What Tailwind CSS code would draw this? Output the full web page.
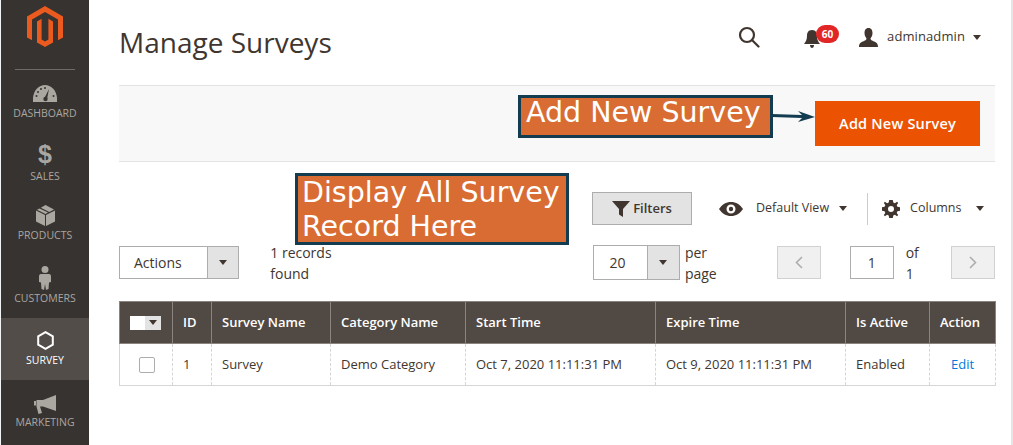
<!DOCTYPE html>
<html lang="en">
<head>
  <meta charset="UTF-8" />
  <title>Manage Surveys</title>
  <script src="https://cdn.jsdelivr.net/npm/@tailwindcss/browser@4"></script>
</head>
<body class="bg-white text-[#41362f] font-['Open_Sans',sans-serif] h-[445px] w-[1013px] overflow-hidden">
  <div class="flex h-[445px] w-[1013px] border-r-2 border-[#e4e4e4]">

    <!-- Sidebar -->
    <aside class="w-[89px] shrink-0 h-full bg-[#373330] border-l border-[#f4f4f4] text-[#aaa6a0] text-[10.5px] leading-[14px] overflow-hidden">
      <div class="h-[70px] mx-[14px] border-b border-[#6f6b67] flex justify-center pt-[6px]">
        <svg class="w-[36px] h-[41px]" viewBox="0 0 36 41" fill="#eb5a1e">
          <path d="M18 0 L36 10.5 V31.5 L31 34.2 V13.4 L18 6 L5 13.4 V34.2 L0 31.5 V10.5 Z" />
          <path d="M18 41 L10 36.4 V15.4 L14.6 12.8 V33.6 L18 35.4 L21.4 33.6 V12.8 L26 15.4 V36.4 Z" />
        </svg>
      </div>

      <!-- Dashboard -->
      <a class="h-[62px] flex flex-col items-center pt-[15px]">
        <svg class="w-[24px] h-[17px]" viewBox="0 0 24 17" fill="#aaa6a0">
          <path d="M0 17 C-1 7 5 0 12 0 C19 0 25 7 24 17 Z" />
          <path d="M11 14 L16 4 L14 14 Z" fill="#373330" />
          <circle cx="12.5" cy="14" r="2.2" fill="#373330" />
          <circle cx="5" cy="7" r="1" fill="#373330" />
          <circle cx="8" cy="4" r="1" fill="#373330" />
          <circle cx="12" cy="3" r="1" fill="#373330" />
          <circle cx="3.5" cy="11" r="1" fill="#373330" />
          <circle cx="20.5" cy="11" r="1" fill="#373330" />
        </svg>
        <span class="mt-[4px]">DASHBOARD</span>
      </a>

      <!-- Sales -->
      <a class="h-[62px] flex flex-col items-center pt-[11px]">
        <span class="h-[23px] text-[25px] leading-[23px] font-bold font-['Liberation_Sans',sans-serif]">$</span>
        <span class="mt-[3px]">SALES</span>
      </a>

      <!-- Products -->
      <a class="h-[62px] flex flex-col items-center pt-[11px]">
        <svg class="w-[19px] h-[21px]" viewBox="0 0 19 21" fill="#aaa6a0">
          <path d="M0 5.5 L9 10 V21 L0 16.5 Z" />
          <path d="M19 5.5 L10 10 V21 L19 16.5 Z" />
          <path d="M9.5 9 L1 4.8 L3.5 3.4 L12 7.6 Z" />
          <path d="M13.3 6.9 L4.8 2.7 L9.5 0 L18 4.6 Z" />
        </svg>
        <span class="mt-[2px]">PRODUCTS</span>
      </a>

      <!-- Customers -->
      <a class="h-[62px] flex flex-col items-center pt-[10px]">
        <svg class="w-[12px] h-[24px]" viewBox="0 0 12 24" fill="#aaa6a0">
          <circle cx="6" cy="3.5" r="3.5" />
          <path d="M2 8 H10 C11.5 8 12 9 12 10.5 V16 L10 16.5 L9.5 23 L7 24 L6 18 L5 24 L2.5 23 L2 16.5 L0 16 V10.5 C0 9 0.5 8 2 8 Z" />
        </svg>
        <span class="mt-[1px]">CUSTOMERS</span>
      </a>

      <!-- Survey -->
      <a class="h-[62px] flex flex-col items-center pt-[13px] bg-[#524d49] text-white">
        <svg class="w-[17px] h-[19px]" viewBox="0 0 17 19" fill="none" stroke="#ffffff" stroke-width="2">
          <path d="M8.5 1.2 L15.8 5.4 V13.6 L8.5 17.8 L1.2 13.6 V5.4 Z" />
        </svg>
        <span class="mt-[3px]">SURVEY</span>
      </a>

      <!-- Marketing -->
      <a class="h-[62px] flex flex-col items-center pt-[15px]">
        <svg class="w-[22px] h-[19px]" viewBox="0 0 22 19" fill="#aaa6a0">
          <path d="M22 0 V16 L9 11.5 H6 L8 18 L4.5 19 L2.5 11.5 V5 H9 Z" />
          <rect x="0" y="6" width="2" height="4.5" />
        </svg>
        <span class="mt-[1px]">MARKETING</span>
      </a>
    </aside>

    <!-- Main -->
    <main class="relative flex-1 min-w-0 pl-[30px] pr-[16px]">

      <!-- Page header -->
      <header class="h-[85px] flex items-start">
        <h1 class="mt-[23px] text-[28px] leading-[38px] font-normal">Manage Surveys</h1>
        <div class="ml-auto mt-[24px] flex items-center h-[26px] text-[13px]">
          <svg class="w-[22px] h-[22px]" viewBox="0 0 22 22" fill="none" stroke="#41362f" stroke-width="2.2">
            <circle cx="9" cy="9" r="7" />
            <path d="M14 14 L20.5 20.5" stroke-linecap="round" />
          </svg>
          <div class="relative ml-[44px] w-[35px] h-[26px]">
            <svg class="absolute left-0 top-[6px] w-[16px] h-[18px]" viewBox="0 0 16 18" fill="#41362f">
              <path d="M8 0 C12 0 13 3 13 6 C13 10 14.5 12 16 14 H0 C1.5 12 3 10 3 6 C3 3 4 0 8 0 Z" />
              <path d="M6 15 H10 C10 17 9 18 8 18 C7 18 6 17 6 15 Z" />
            </svg>
            <span class="absolute left-[12px] top-[1px] w-[23px] h-[18px] rounded-full bg-[#e22626] text-white text-[10px] leading-[18px] font-bold text-center">60</span>
          </div>
          <svg class="ml-[20px] w-[19px] h-[19px]" viewBox="0 0 19 19" fill="#41362f">
            <path d="M9.5 0 C12.5 0 13.5 2.5 13.5 5 C13.5 7.5 12.5 9 11.5 10.5 C11.5 12 13 12.6 15 13.4 C17.5 14.4 19 15.2 19 19 H0 C0 15.2 1.5 14.4 4 13.4 C6 12.6 7.5 12 7.5 10.5 C6.5 9 5.5 7.5 5.5 5 C5.5 2.5 6.5 0 9.5 0 Z" />
          </svg>
          <span class="ml-[9px] tracking-[0.1px]">adminadmin</span>
          <svg class="ml-[8px] w-[8px] h-[5px]" viewBox="0 0 8 5" fill="#41362f"><path d="M0 0 H8 L4 5 Z" /></svg>
          <span class="w-[14px]"></span>
        </div>
      </header>

      <!-- Page actions -->
      <div class="h-[77px] bg-[#f8f8f8] border-y border-[#e3e3e3] flex items-center justify-end pr-[15px]">
        <button class="w-[165px] h-[45px] bg-[#eb5202] text-white text-[14.5px] font-semibold tracking-[0.2px]">Add New Survey</button>
      </div>

      <!-- Toolbar row 1 -->
      <div class="mt-[30px] h-[33px] flex items-center text-[#41362f]">
        <button class="ml-[473px] w-[100px] h-[33px] bg-[#e3e3e3] border border-[#adadad] flex items-center justify-center gap-[3px] text-[13px] font-semibold">
          <svg class="w-[18px] h-[16px]" viewBox="0 0 18 16" fill="#41362f"><path d="M0 0 H18 L11 8 V16 L7 13.5 V8 Z" /></svg>
          Filters
        </button>
        <svg class="ml-[27px] w-[24px] h-[14px]" viewBox="0 0 24 14" fill="#41362f">
          <path fill-rule="evenodd" d="M0 7 C3 2.5 7 0 12 0 C17 0 21 2.5 24 7 C21 11.5 17 14 12 14 C7 14 3 11.5 0 7 Z M12 2.5 A4.5 4.5 0 1 0 12 11.5 A4.5 4.5 0 1 0 12 2.5 Z" />
          <circle cx="12" cy="7" r="2.2" />
        </svg>
        <span class="ml-[13px] text-[12.5px]">Default View</span>
        <svg class="ml-[10px] w-[8px] h-[5px]" viewBox="0 0 8 5" fill="#41362f"><path d="M0 0 H8 L4 5 Z" /></svg>
        <span class="ml-[20px] h-[32px] border-l border-[#cccccc]"></span>
        <svg class="ml-[14px] w-[18px] h-[18px]" viewBox="0 0 18 18" fill="#41362f">
          <path fill-rule="evenodd" d="M7.2 0 H10.8 L11.3 2.6 L12.9 3.3 L15.1 1.8 L16.2 2.9 L14.7 5.1 L15.4 6.7 L18 7.2 V10.8 L15.4 11.3 L14.7 12.9 L16.2 15.1 L15.1 16.2 L12.9 14.7 L11.3 15.4 L10.8 18 H7.2 L6.7 15.4 L5.1 14.7 L2.9 16.2 L1.8 15.1 L3.3 12.9 L2.6 11.3 L0 10.8 V7.2 L2.6 6.7 L3.3 5.1 L1.8 2.9 L2.9 1.8 L5.1 3.3 L6.7 2.6 Z M9 6 A3 3 0 1 0 9 12 A3 3 0 1 0 9 6 Z" />
        </svg>
        <span class="ml-[10px] text-[12.5px] -mt-[1px]">Columns</span>
        <svg class="ml-[14px] w-[8px] h-[5px]" viewBox="0 0 8 5" fill="#41362f"><path d="M0 0 H8 L4 5 Z" /></svg>
      </div>

      <!-- Toolbar row 2 -->
      <div class="mt-[21px] h-[33px] flex items-center text-[14px]">
        <div class="w-[121px] h-[33px] border border-[#adadad] flex">
          <span class="flex-1 pl-[14px] leading-[31px]">Actions</span>
          <span class="w-[31px] bg-[#e3e3e3] border-l border-[#adadad] flex items-center justify-center">
            <svg class="w-[8px] h-[5px]" viewBox="0 0 8 5" fill="#41362f"><path d="M0 0 H8 L4 5 Z" /></svg>
          </span>
        </div>
        <span class="ml-[31px]">1 records found</span>
        <div class="ml-[220px] w-[87px] h-[35px] border border-[#adadad] flex">
          <span class="flex-1 pl-[15px] leading-[33px]">20</span>
          <span class="w-[32px] bg-[#e3e3e3] border-l border-[#adadad] flex items-center justify-center">
            <svg class="w-[8px] h-[5px]" viewBox="0 0 8 5" fill="#41362f"><path d="M0 0 H8 L4 5 Z" /></svg>
          </span>
        </div>
        <span class="ml-[5px]">per page</span>
        <span class="ml-[35px] w-[44px] h-[33px] bg-[#f0f0f0] border border-[#d1d1d1] flex items-center justify-center">
          <svg class="w-[8px] h-[13px]" viewBox="0 0 8 13" fill="none" stroke="#adadad" stroke-width="1.6"><path d="M7 1 L1.5 6.5 L7 12" /></svg>
        </span>
        <span class="ml-[29px] w-[44px] h-[33px] border border-[#adadad] flex items-center justify-center">1</span>
        <span class="ml-[12px]">of 1</span>
        <span class="ml-[21px] w-[44px] h-[33px] bg-[#f0f0f0] border border-[#d1d1d1] flex items-center justify-center">
          <svg class="w-[8px] h-[13px]" viewBox="0 0 8 13" fill="none" stroke="#adadad" stroke-width="1.6"><path d="M1 1 L6.5 6.5 L1 12" /></svg>
        </span>
      </div>

      <!-- Grid -->
      <table class="mt-[22px] w-[876px] table-fixed border-collapse text-[13px]">
        <colgroup>
          <col class="w-[53px]" /><col class="w-[39px]" /><col class="w-[119px]" /><col class="w-[135px]" />
          <col class="w-[190px]" /><col class="w-[190px]" /><col class="w-[84px]" /><col class="w-[66px]" />
        </colgroup>
        <thead>
          <tr class="h-[42px] bg-[#514943] text-white text-left font-semibold">
            <th class="border border-[#8a837f] font-semibold">
              <div class="ml-[10px] flex w-[31px] h-[14px]">
                <span class="w-[15px] bg-white"></span>
                <span class="w-[16px] bg-[#e3e3e3] flex items-center justify-center">
                  <svg class="w-[8px] h-[5px]" viewBox="0 0 8 5" fill="#41362f"><path d="M0 0 H8 L4 5 Z" /></svg>
                </span>
              </div>
            </th>
            <th class="border border-[#8a837f] font-semibold pl-[10px]">ID</th>
            <th class="border border-[#8a837f] font-semibold pl-[10px]">Survey Name</th>
            <th class="border border-[#8a837f] font-semibold pl-[10px]">Category Name</th>
            <th class="border border-[#8a837f] font-semibold pl-[10px]">Start Time</th>
            <th class="border border-[#8a837f] font-semibold pl-[10px]">Expire Time</th>
            <th class="border border-[#8a837f] font-semibold pl-[10px]">Is Active</th>
            <th class="border border-[#8a837f] font-semibold pl-[10px]">Action</th>
          </tr>
        </thead>
        <tbody>
          <tr class="h-[42px]">
            <td class="border-l border-b border-[#d6d6d6]">
              <span class="block ml-[19px] w-[16px] h-[16px] bg-white border border-[#adadad] rounded-[2px]"></span>
            </td>
            <td class="border-l border-b border-l-[#d6d6d6] border-dashed border-b-[#d6d6d6] border-b-solid pl-[10px]">1</td>
            <td class="border-l border-dashed border-l-[#d6d6d6] pl-[10px]">Survey</td>
            <td class="border-l border-dashed border-l-[#d6d6d6] pl-[10px]">Demo Category</td>
            <td class="border-l border-dashed border-l-[#d6d6d6] pl-[10px]">Oct 7, 2020 11:11:31 PM</td>
            <td class="border-l border-dashed border-l-[#d6d6d6] pl-[10px]">Oct 9, 2020 11:11:31 PM</td>
            <td class="border-l border-dashed border-l-[#d6d6d6] pl-[10px]">Enabled</td>
            <td class="border-l border-r border-r-[#d6d6d6] border-dashed border-l-[#d6d6d6] text-center text-[#007bdb]">Edit</td>
          </tr>
          <tr><td colspan="8" class="h-0 p-0 border-t border-[#d6d6d6]"></td></tr>
        </tbody>
      </table>

      <!-- Annotations over the screenshot -->
      <div class="absolute left-[429px] top-[95px] w-[255px] h-[43px] bg-[#d96c32] border-[3px] border-[#133c51] text-white text-[28.5px] leading-[30px] pl-[5px] font-['DejaVu_Sans',sans-serif] whitespace-nowrap">Add New Survey</div>
      <svg class="absolute left-[683px] top-[108px] w-[44px] h-[16px]" viewBox="0 0 44 16" fill="#133c51">
        <path d="M0 6 L30 7 L26 3 L43 9 L26 14 L30 10 L0 9 Z" />
      </svg>
      <div class="absolute left-[206px] top-[173px] w-[274px] h-[72px] bg-[#d96c32] border-[3px] border-[#133c51] text-white text-[28.5px] leading-[34px] pl-[4px] pt-[-1px] font-['DejaVu_Sans',sans-serif] whitespace-nowrap">Display All Survey<br />Record Here</div>
    </main>
  </div>
</body>
</html>
